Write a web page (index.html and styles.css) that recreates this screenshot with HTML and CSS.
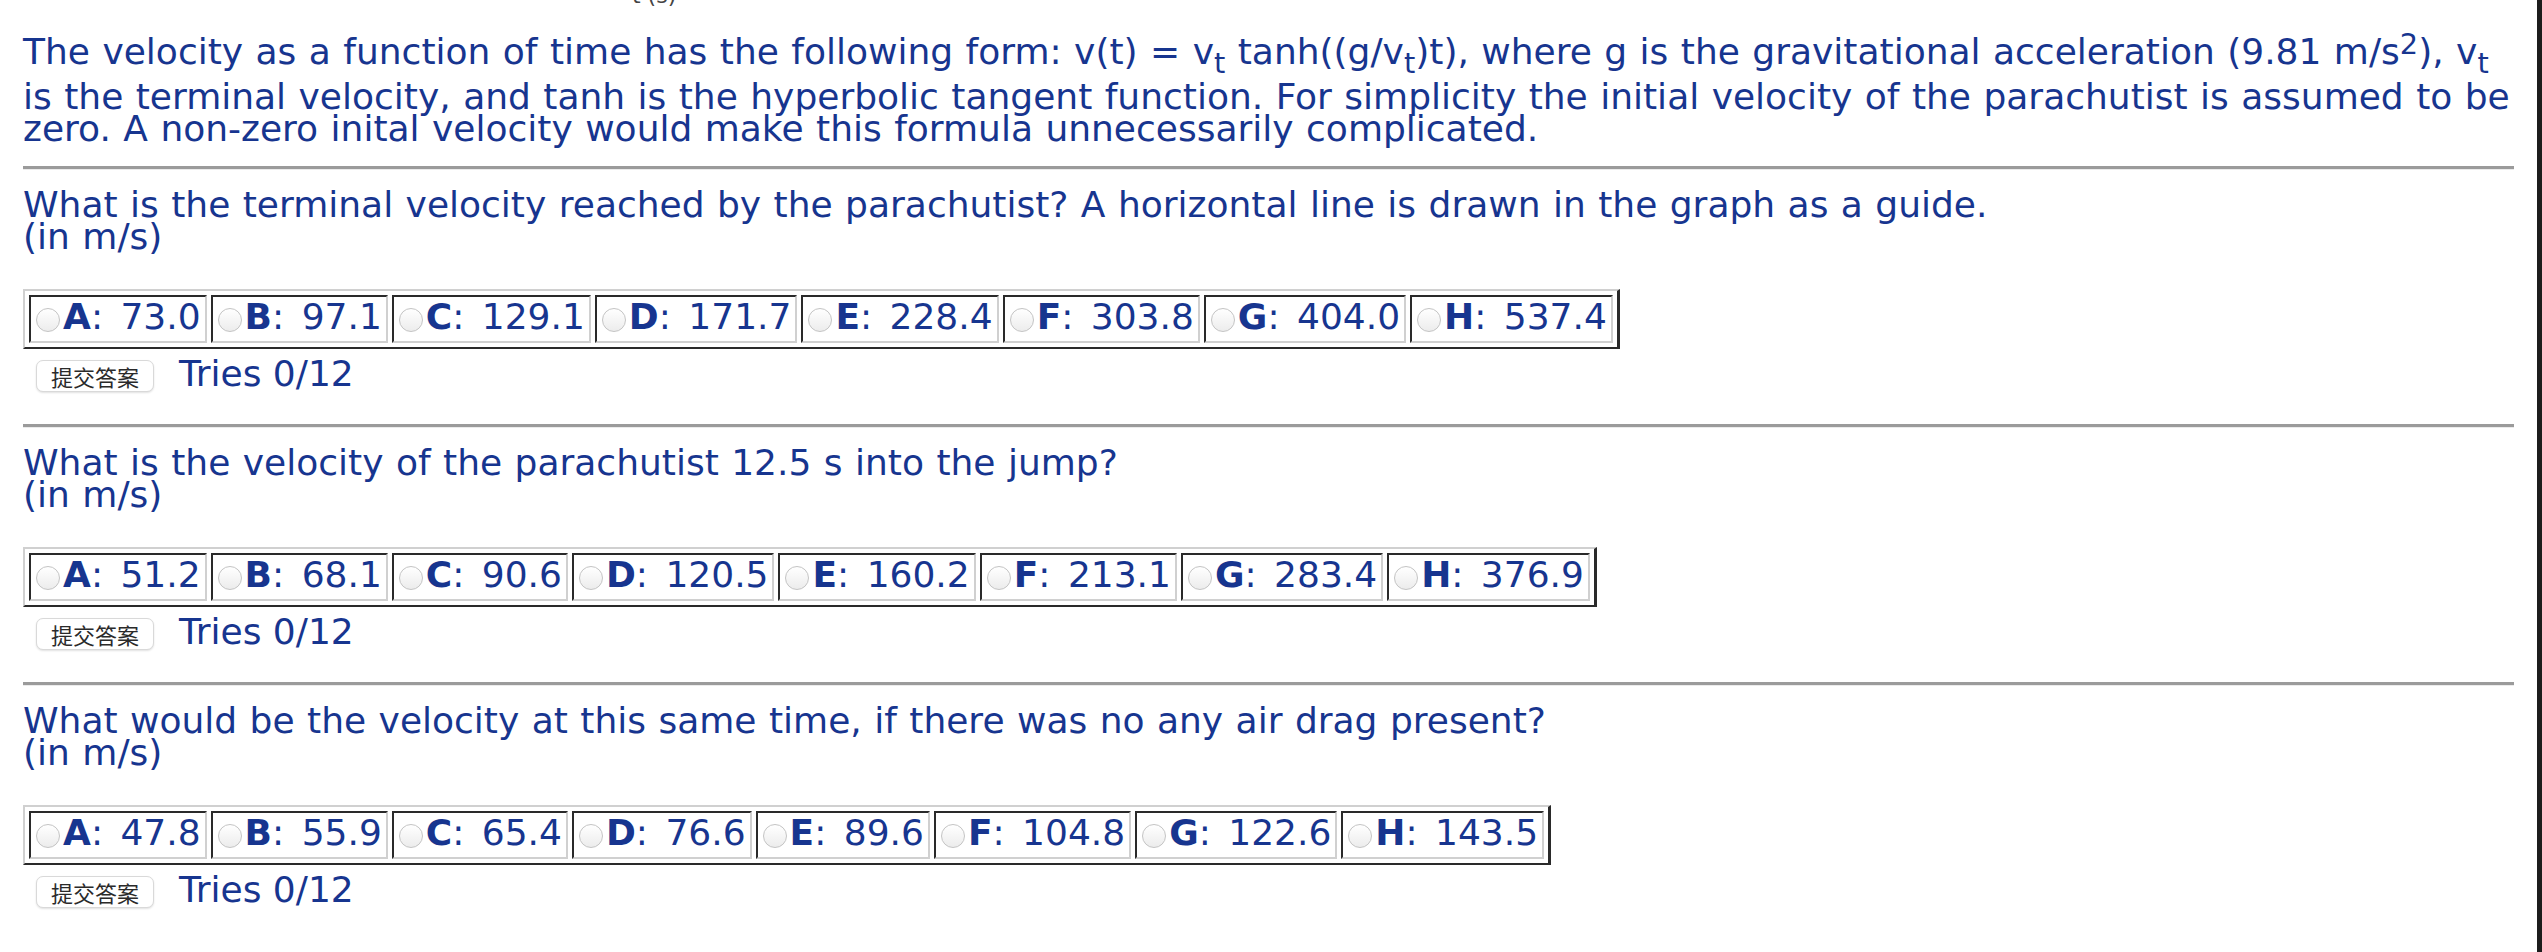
FILE: index.html
```html
<!DOCTYPE html>
<html lang="zh">
<head>
<meta charset="utf-8">
<title>Parachutist</title>
<link rel="stylesheet" href="styles.css">
</head>
<body>
<div class="frame">
  <main class="page">
    <div class="axis"><span class="axis-label">t (s)</span></div>
    <p class="intro">
      <span class="line first">The velocity as a function of time has the following form: v(t) = v<sub>t</sub> tanh((g/v<sub>t</sub>)t), where g is the gravitational acceleration (9.81 m/s<sup>2</sup>), v<sub>t</sub></span>
      <span class="line">is the terminal velocity, and tanh is the hyperbolic tangent function. For simplicity the initial velocity of the parachutist is assumed to be</span>
      <span class="line">zero. A non-zero inital velocity would make this formula unnecessarily complicated.</span>
    </p>

    <section class="q">
      <hr class="rule">
      <p class="prompt">What is the terminal velocity reached by the parachutist? A horizontal line is drawn in the graph as a guide.<br>(in m/s)</p>
      <table class="opts">
        <tr>
          <td><span class="radio"></span><b>A</b>: 73.0</td>
          <td><span class="radio"></span><b>B</b>: 97.1</td>
          <td><span class="radio"></span><b>C</b>: 129.1</td>
          <td><span class="radio"></span><b>D</b>: 171.7</td>
          <td><span class="radio"></span><b>E</b>: 228.4</td>
          <td><span class="radio"></span><b>F</b>: 303.8</td>
          <td><span class="radio"></span><b>G</b>: 404.0</td>
          <td><span class="radio"></span><b>H</b>: 537.4</td>
        </tr>
      </table>
      <div class="submit"><button class="btn" type="button">提交答案</button><span class="tries">Tries 0/12</span></div>
    </section>

    <section class="q">
      <hr class="rule">
      <p class="prompt">What is the velocity of the parachutist 12.5 s into the jump?<br>(in m/s)</p>
      <table class="opts">
        <tr>
          <td><span class="radio"></span><b>A</b>: 51.2</td>
          <td><span class="radio"></span><b>B</b>: 68.1</td>
          <td><span class="radio"></span><b>C</b>: 90.6</td>
          <td><span class="radio"></span><b>D</b>: 120.5</td>
          <td><span class="radio"></span><b>E</b>: 160.2</td>
          <td><span class="radio"></span><b>F</b>: 213.1</td>
          <td><span class="radio"></span><b>G</b>: 283.4</td>
          <td><span class="radio"></span><b>H</b>: 376.9</td>
        </tr>
      </table>
      <div class="submit"><button class="btn" type="button">提交答案</button><span class="tries">Tries 0/12</span></div>
    </section>

    <section class="q">
      <hr class="rule">
      <p class="prompt">What would be the velocity at this same time, if there was no any air drag present?<br>(in m/s)</p>
      <table class="opts">
        <tr>
          <td><span class="radio"></span><b>A</b>: 47.8</td>
          <td><span class="radio"></span><b>B</b>: 55.9</td>
          <td><span class="radio"></span><b>C</b>: 65.4</td>
          <td><span class="radio"></span><b>D</b>: 76.6</td>
          <td><span class="radio"></span><b>E</b>: 89.6</td>
          <td><span class="radio"></span><b>F</b>: 104.8</td>
          <td><span class="radio"></span><b>G</b>: 122.6</td>
          <td><span class="radio"></span><b>H</b>: 143.5</td>
        </tr>
      </table>
      <div class="submit"><button class="btn" type="button">提交答案</button><span class="tries">Tries 0/12</span></div>
    </section>
  </main>
  <div class="edge"></div>
</div>
</body>
</html>
```

FILE: styles.css
```css
html, body {
  margin: 0;
  padding: 0;
  background: #ffffff;
}

body {
  font-family: "DejaVu Sans", Verdana, sans-serif;
  font-size: 36px;
  line-height: 32px;
  color: #17358f;
  word-spacing: 1px;
}

.frame {
  display: flex;
  width: 2542px;
  height: 952px;
  overflow: hidden;
}

.page {
  flex: 1;
  padding-left: 23px;
  padding-right: 23px;
}

.edge {
  width: 5px;
  background: #1c1c1c;
}

.axis {
  height: 8px;
  overflow: hidden;
  padding-left: 609px;
}

.axis-label {
  display: block;
  font-size: 22px;
  line-height: 22px;
  margin-top: -15px;
  color: #444444;
  word-spacing: 0;
}

.intro {
  margin: 27.5px 0 21.5px 0;
}

.line {
  display: block;
  white-space: nowrap;
}

.line.first {
  padding-bottom: 13px;
}

sub, sup {
  font-size: 0.8em;
  line-height: 0;
}

sub {
  vertical-align: -9px;
}

sup {
  vertical-align: 10px;
}

.rule {
  margin: 0;
  height: 0;
  border: 0;
  border-top: 3px solid #9b9b9b;
  border-bottom: 1px solid #ebebeb;
}

.prompt {
  margin: 18.5px 0 0 0;
  white-space: nowrap;
}

.opts {
  margin-top: 36.5px;
  border-collapse: separate;
  border-spacing: 4px;
  border-style: solid;
  border-width: 2px 3px 2px 2px;
  border-color: #d0d0d0 #2a2a2a #2a2a2a #d0d0d0;
}

.opts td {
  border-style: solid;
  border-width: 2px;
  border-color: #2a2a2a #d0d0d0 #d0d0d0 #2a2a2a;
  padding: 0 4px 5px 1px;
  line-height: 39px;
  white-space: nowrap;
  word-spacing: 6px;
}

.opts b {
  font-weight: bold;
}

.radio {
  display: inline-block;
  width: 22px;
  height: 22px;
  border: 1px solid #c4c4c4;
  border-radius: 50%;
  background: linear-gradient(#ffffff, #ececec);
  margin: 0 3px 0 4px;
  vertical-align: -3px;
}

.submit {
  display: flex;
  align-items: flex-end;
  height: 36px;
  margin-top: 7px;
  margin-bottom: 32px;
}

.btn {
  margin: 0 0 0 13px;
  height: 32px;
  padding: 0 14px;
  font-family: "Noto Sans CJK SC", "Noto Sans", sans-serif;
  font-size: 22px;
  line-height: 30px;
  color: #2a2a2a;
  background: #ffffff;
  border: 1px solid #d9d9d9;
  border-radius: 7px;
  box-shadow: 0 1px 2px rgba(0, 0, 0, 0.12);
}

.tries {
  margin-left: 25px;
  line-height: 36px;
  word-spacing: 0;
}
```
